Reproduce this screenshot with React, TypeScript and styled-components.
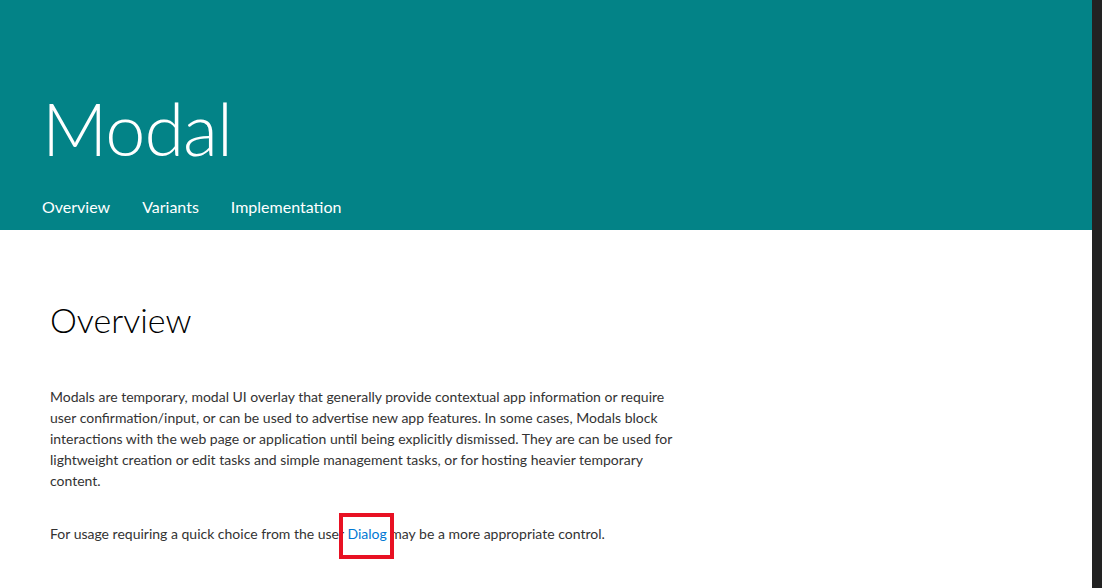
import React from 'react';
import styled, { createGlobalStyle } from 'styled-components';

const GlobalStyle = createGlobalStyle`
  html, body {
    margin: 0;
    padding: 0;
    background: #222222;
  }
  body {
    font-family: Lato, "Open Sans", sans-serif;
  }
`;

const Shell = styled.div`
  width: calc(100% - 10px);
  min-height: 100vh;
  background: #ffffff;
`;

const Header = styled.header`
  height: 230px;
  box-sizing: border-box;
  background: #038387;
  color: #ffffff;
  padding: 86px 0 0 42px;
  display: flex;
  flex-direction: column;
`;

const Title = styled.h1`
  margin: 0;
  font-size: 72px;
  font-weight: 300;
  letter-spacing: -1px;
  line-height: 84px;
`;

const Nav = styled.nav`
  display: flex;
  gap: 32px;
  margin-top: 25px;
`;

const NavLink = styled.a`
  color: #ffffff;
  font-size: 16px;
  line-height: 24px;
  text-decoration: none;
  cursor: pointer;
`;

const Content = styled.main`
  padding: 66px 0 40px 50px;
  max-width: 640px;
`;

const SectionTitle = styled.h2`
  margin: 0 0 42px;
  font-size: 34px;
  font-weight: 300;
  line-height: 48px;
  color: #000000;
`;

const Paragraph = styled.p`
  margin: 0 0 32px;
  font-size: 14px;
  line-height: 21px;
  color: #333333;
`;

const Link = styled.a`
  position: relative;
  color: #0078d4;
  text-decoration: none;

  &::after {
    content: '';
    position: absolute;
    left: -8px;
    right: -7px;
    top: -12px;
    bottom: -17px;
    border: 4px solid #e81123;
  }
`;

const navItems = ['Overview', 'Variants', 'Implementation'];

export default function App() {
  return (
    <>
      <GlobalStyle />
      <Shell>
        <Header>
          <Title>Modal</Title>
          <Nav>
            {navItems.map((item) => (
              <NavLink key={item}>{item}</NavLink>
            ))}
          </Nav>
        </Header>
        <Content>
          <SectionTitle>Overview</SectionTitle>
          <Paragraph>
            Modals are temporary, modal UI overlay that generally provide contextual app information or require
            user confirmation/input, or can be used to advertise new app features. In some cases, Modals block
            interactions with the web page or application until being explicitly dismissed. They are can be used for
            lightweight creation or edit tasks and simple management tasks, or for hosting heavier temporary
            content.
          </Paragraph>
          <Paragraph>
            For usage requiring a quick choice from the user <Link>Dialog</Link> may be a more appropriate control.
          </Paragraph>
        </Content>
      </Shell>
    </>
  );
}
